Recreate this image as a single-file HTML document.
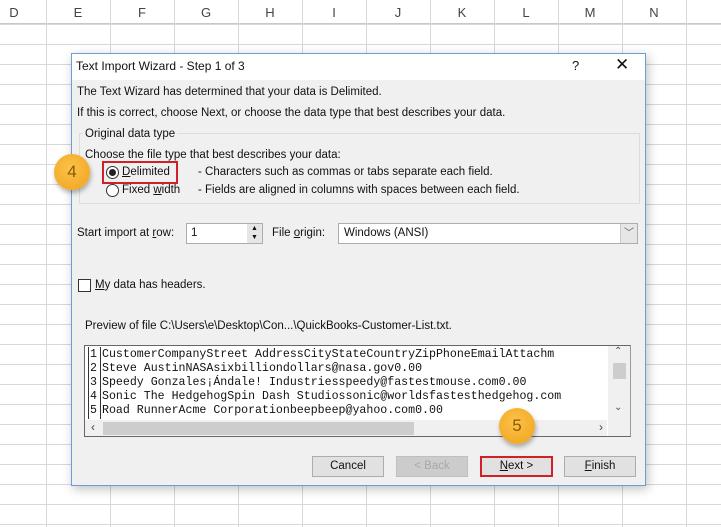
<!DOCTYPE html>
<html><head><style>
*{margin:0;padding:0;box-sizing:border-box}
body{width:721px;height:527px;overflow:hidden;background:#fff;font-family:"Liberation Sans",Arial,sans-serif;font-size:11.5px;color:#111;position:relative}
.grid{position:absolute;left:0;top:0;width:721px;height:527px;
background-image:linear-gradient(to right,#d8d8d8 1px,transparent 1px),linear-gradient(to bottom,#d8d8d8 1px,transparent 1px);
background-size:64px 20px;background-position:46px 24px}
.hdr{position:absolute;left:0;top:0;width:721px;height:24px;background:#fff;border-bottom:1px solid #c8c8c8}
.hdr span{position:absolute;top:5px;font-size:13px;color:#444;width:20px;text-align:center}
.hdr i{position:absolute;top:0;width:1px;height:24px;background:#d8d8d8}
.a{position:absolute;white-space:nowrap}
.dlg{position:absolute;left:71px;top:53px;width:575px;height:433px;background:#f0f0f0;border:1px solid #6a9fd4;box-shadow:2px 3px 10px rgba(0,0,0,.25)}
.btn{position:absolute;top:402px;height:21px;width:72px;background:#e1e1e1;border:1px solid #adadad;text-align:center;line-height:19px}
.mono{font-family:"Liberation Mono",monospace;font-size:11.6px;line-height:14px}
.badge{position:absolute;width:36px;height:36px;border-radius:50%;background:radial-gradient(circle at 45% 40%,#fbc24a,#f0a21a);box-shadow:1px 3px 5px rgba(0,0,0,.3);color:#8a5a00;font-size:17px;text-align:center;line-height:36px}
</style></head><body>
<div class="grid"></div>
<div class="hdr">
<span style="left:4px">D</span><span style="left:68px">E</span><span style="left:132px">F</span><span style="left:196px">G</span><span style="left:260px">H</span><span style="left:324px">I</span><span style="left:388px">J</span><span style="left:452px">K</span><span style="left:516px">L</span><span style="left:580px">M</span><span style="left:644px">N</span>
<i style="left:46px"></i><i style="left:110px"></i><i style="left:174px"></i><i style="left:238px"></i><i style="left:302px"></i><i style="left:366px"></i><i style="left:430px"></i><i style="left:494px"></i><i style="left:558px"></i><i style="left:622px"></i><i style="left:686px"></i>
</div>
<div class="dlg">
<div class="a" style="left:0;top:0;width:573px;height:26px;background:#fff"></div>
<div class="a" style="left:4px;top:5px;font-size:12px">Text Import Wizard - Step 1 of 3</div>
<div class="a" style="left:500px;top:4px;font-size:13px">?</div>
<div class="a" style="left:543px;top:1px;font-size:17px">✕</div>
<div class="a" style="left:5px;top:32px">The Text Wizard has determined that your data is Delimited.</div>
<div class="a" style="left:5px;top:53px">If this is correct, choose Next, or choose the data type that best describes your data.</div>
<div class="a" style="left:7px;top:79px;width:561px;height:71px;border:1px solid #dcdcdc"></div>
<div class="a" style="left:11px;top:74px;background:#f0f0f0;padding:0 2px">Original data type</div>
<div class="a" style="left:13px;top:95px">Choose the file type that best describes your data:</div>
<div class="a" style="left:30px;top:107px;width:76px;height:23px;border:2px solid #d0202a"></div>
<div class="a" style="left:34px;top:112px;width:13px;height:13px;border:1px solid #333;border-radius:50%;background:#fff"><div style="margin:2px;width:7px;height:7px;border-radius:50%;background:#222"></div></div>
<div class="a" style="left:50px;top:112px"><u>D</u>elimited</div>
<div class="a" style="left:126px;top:112px">- Characters such as commas or tabs separate each field.</div>
<div class="a" style="left:34px;top:130px;width:13px;height:13px;border:1px solid #333;border-radius:50%;background:#fff"></div>
<div class="a" style="left:50px;top:130px">Fixed <u>w</u>idth</div>
<div class="a" style="left:126px;top:130px">- Fields are aligned in columns with spaces between each field.</div>
<div class="a" style="left:5px;top:173px">Start import at <u>r</u>ow:</div>
<div class="a" style="left:114px;top:169px;width:77px;height:21px;border:1px solid #abadb3;background:#fff;padding:3px 0 0 4px">1</div>
<div class="a" style="left:175px;top:170px;width:15px;height:19px;background:#e6e6e6;font-size:7px;line-height:9px;text-align:center">▲<br>▼</div>
<div class="a" style="left:200px;top:173px">File <u>o</u>rigin:</div>
<div class="a" style="left:266px;top:169px;width:300px;height:21px;border:1px solid #abadb3;background:#fff;padding:3px 0 0 5px">Windows (ANSI)</div>
<div class="a" style="left:548px;top:170px;width:17px;height:19px;background:#e6e6e6;border-left:1px solid #ccc;text-align:center;font-size:10px;line-height:19px;color:#555">﹀</div>
<div class="a" style="left:6px;top:225px;width:13px;height:13px;border:1px solid #333;background:#fff"></div>
<div class="a" style="left:23px;top:225px"><u>M</u>y data has headers.</div>
<div class="a" style="left:13px;top:266px">Preview of file C:\Users\e\Desktop\Con...\QuickBooks-Customer-List.txt.</div>
<div class="a" style="left:12px;top:291px;width:547px;height:92px;border:1px solid #666;background:#fff;border-right:1px solid #999"></div>
<div class="a" style="left:536px;top:292px;width:22px;height:90px;background:#f0f0f0"></div>
<div class="a" style="left:541px;top:309px;width:13px;height:16px;background:#cdcdcd"></div>
<div class="a" style="left:542px;top:292px;font-size:10px;color:#555">⌃</div>
<div class="a" style="left:542px;top:348px;font-size:10px;color:#555">⌄</div>
<div class="a" style="left:13px;top:366px;width:522px;height:16px;background:#f0f0f0"></div>
<div class="a" style="left:31px;top:368px;width:311px;height:13px;background:#cdcdcd"></div>
<div class="a" style="left:19px;top:366px;font-size:12px;color:#444">‹</div>
<div class="a" style="left:527px;top:366px;font-size:12px;color:#444">›</div>
<div class="a" style="left:16px;top:293px;width:13px;height:72px;border-left:1px solid #333;border-right:1px solid #333"></div>
<div class="a mono" style="left:18px;top:294px">
<div>1<br>2<br>3<br>4<br>5</div>
</div>
<div class="a mono" style="left:30px;top:294px">
<div>CustomerCompanyStreet AddressCityStateCountryZipPhoneEmailAttachm</div>
<div>Steve AustinNASAsixbilliondollars@nasa.gov0.00</div>
<div>Speedy Gonzales¡Ándale! Industriesspeedy@fastestmouse.com0.00</div>
<div>Sonic The HedgehogSpin Dash Studiossonic@worldsfastesthedgehog.com</div>
<div>Road RunnerAcme Corporationbeepbeep@yahoo.com0.00</div>
</div>
<div class="btn" style="left:240px">Cancel</div>
<div class="btn" style="left:324px;color:#a8a8a8;background:#ccc;border-color:#bfbfbf">&lt; Back</div>
<div class="btn" style="left:408px;width:73px;border:2px solid #d0202a;line-height:17px"><u>N</u>ext &gt;</div>
<div class="btn" style="left:492px"><u>F</u>inish</div>
</div>
<div class="badge" style="left:54px;top:154px">4</div>
<div class="badge" style="left:499px;top:408px">5</div>
</body></html>
